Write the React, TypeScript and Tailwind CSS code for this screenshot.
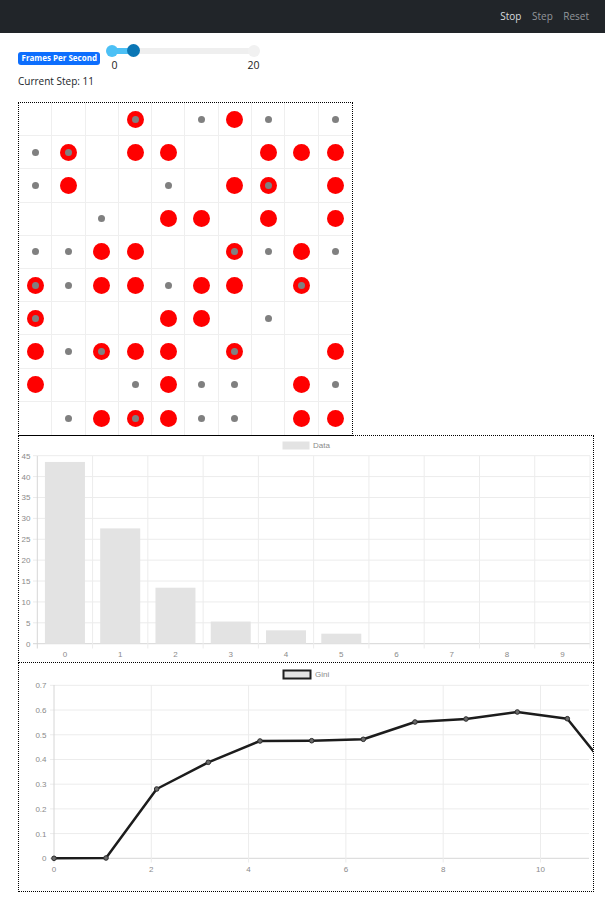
import React from 'react';

// --- Agent grid data (R = rich agent, G = broke agent, B = both in cell) ---
const GRID_ROWS = [
  '. . . B . G R G . G',
  'G B . R R . . R R R',
  'G R . . G . R B . R',
  '. . G . R R . R . R',
  'G G R R . . B G R G',
  'B G R R G R R . B .',
  'B . . . R R . G . .',
  'R G B R R . B . . R',
  'R . . G R G G . R G',
  '. G R B R G G . R R',
].map((r) => r.split(' '));

const WEALTH_BINS = [43.5, 27.6, 13.4, 5.3, 3.2, 2.4, 0, 0, 0, 0];

const GINI_POINTS: [number, number][] = [
  [54, 858.3],
  [106, 858],
  [156.7, 789],
  [208.3, 762.3],
  [260, 741],
  [311.7, 740.7],
  [363.3, 739.3],
  [415, 722],
  [466, 719],
  [517.3, 712],
  [567.3, 718.7],
  [619, 783],
];

const chartFont = { fontFamily: '"Liberation Sans", Arial, sans-serif' };

function Cell({ kind, col, row }: { kind: string; col: number; row: number }) {
  const lines = `${col < 9 ? 'border-r' : ''} ${row < 9 ? 'border-b' : ''}`;
  return (
    <div className={`flex items-center justify-center border-[#efefef] ${lines}`}>
      {kind === 'R' && <div className="w-[17px] h-[17px] rounded-full bg-[#ff0000]" />}
      {kind === 'G' && <div className="w-[7px] h-[7px] rounded-full bg-[#808080]" />}
      {kind === 'B' && (
        <div className="w-[17px] h-[17px] rounded-full bg-[#ff0000] flex items-center justify-center">
          <div className="w-[7px] h-[7px] rounded-full bg-[#808080]" />
        </div>
      )}
    </div>
  );
}

function AgentGrid() {
  return (
    <div className="w-[335px] h-[334px] border border-dotted border-black">
      <div className="grid grid-cols-10 grid-rows-10 w-full h-full">
        {GRID_ROWS.map((row, r) =>
          row.map((kind, c) => <Cell key={`${r}-${c}`} kind={kind} col={c} row={r} />)
        )}
      </div>
    </div>
  );
}

function BarChart() {
  const x0 = 37.3;
  const cat = 55.27;
  const yZero = 642.7;
  const perUnit = 4.178;
  const ticks = [0, 5, 10, 15, 20, 25, 30, 35, 40, 45];
  return (
    <div className="w-[576px] h-[228px] border border-dotted border-black -mt-px">
      <svg width="574" height="226" viewBox="19 435 574 226" style={chartFont}>
        {/* legend */}
        <rect x="282.5" y="440.5" width="27" height="8" fill="#e3e3e3" />
        <text x="313" y="447.3" fontSize="8" fill="#8a8a8a">Data</text>
        {/* horizontal grid */}
        {ticks.map((t) => {
          const y = yZero - t * perUnit;
          return (
            <g key={t}>
              <line x1="33" x2="590" y1={y} y2={y} stroke={t === 0 ? '#d6d6d6' : '#ececec'} strokeWidth="1" />
              <text x="30.5" y={y + 3} fontSize="8" fill="#8a8a8a" textAnchor="end">{t}</text>
            </g>
          );
        })}
        {/* vertical grid */}
        {Array.from({ length: 11 }).map((_, i) => {
          const x = x0 + i * cat;
          return <line key={i} x1={x} x2={x} y1="455" y2="647.5" stroke={i === 0 ? '#d6d6d6' : '#ececec'} strokeWidth="1" />;
        })}
        {/* bars */}
        {WEALTH_BINS.map((v, i) => {
          const cx = x0 + (i + 0.5) * cat;
          const h = v * perUnit;
          return (
            <g key={i}>
              {v > 0 && <rect x={cx - 20} y={yZero - h} width="40" height={h} fill="#e3e3e3" />}
              <text x={cx} y="656" fontSize="8" fill="#8a8a8a" textAnchor="middle">{i}</text>
            </g>
          );
        })}
      </svg>
    </div>
  );
}

function LineChart() {
  const yZero = 858.3;
  const step = 24.71;
  const xStep = 48.65;
  const ticks = [0, 1, 2, 3, 4, 5, 6, 7];
  const xTicks = [0, 2, 4, 6, 8, 10];
  const path = GINI_POINTS.map(([x, y], i) => `${i === 0 ? 'M' : 'L'}${x} ${y}`).join(' ');
  return (
    <div className="w-[576px] h-[230px] border border-dotted border-black -mt-px">
      <svg width="574" height="228" viewBox="19 663 574 228" style={chartFont}>
        {/* legend */}
        <rect x="283.5" y="670.5" width="27" height="8" fill="#e3e3e3" stroke="#1f1f1f" strokeWidth="2" />
        <text x="315" y="677.3" fontSize="8" fill="#8a8a8a">Gini</text>
        {ticks.map((t) => {
          const y = yZero - t * step;
          return (
            <g key={t}>
              <line x1="50" x2="589" y1={y} y2={y} stroke={t === 0 ? '#d6d6d6' : '#ececec'} strokeWidth="1" />
              <text x="46.5" y={y + 3} fontSize="8" fill="#8a8a8a" textAnchor="end">{t === 0 ? '0' : `0.${t}`}</text>
            </g>
          );
        })}
        {xTicks.map((t) => {
          const x = 54 + t * xStep;
          return (
            <g key={t}>
              <line x1={x} x2={x} y1="685" y2="862.5" stroke={t === 0 ? '#d6d6d6' : '#ececec'} strokeWidth="1" />
              <text x={x} y="871.5" fontSize="8" fill="#8a8a8a" textAnchor="middle">{t}</text>
            </g>
          );
        })}
        <path d={path} fill="none" stroke="#1c1c1c" strokeWidth="2.5" strokeLinejoin="round" />
        {GINI_POINTS.map(([x, y], i) => (
          <circle key={i} cx={x} cy={y} r="2.3" fill="#6b6b6b" stroke="#2a2a2a" strokeWidth="1" />
        ))}
      </svg>
    </div>
  );
}

function FpsSlider() {
  return (
    <div className="flex flex-col w-[154px]">
      <div className="relative h-[13px]">
        <div className="absolute left-[6px] right-[6px] top-[3.5px] h-[6px] rounded-full bg-[#efefef]" />
        <div className="absolute left-[6px] w-[22px] top-[3.5px] h-[6px] bg-[#4cc0f5]" />
        <div className="absolute left-0 top-[0.5px] w-[12px] h-[12px] rounded-full bg-[#4cc0f5]" />
        <div className="absolute right-0 top-[0.5px] w-[12px] h-[12px] rounded-full bg-[#f1f1f1]" />
        <div className="absolute left-[21px] top-0 w-[13px] h-[13px] rounded-full bg-[#0a76b5]" />
      </div>
      <div className="flex justify-between text-[10.5px] leading-[12px] text-[#222] pl-[5px] pr-[1px] mt-[2px]">
        <span>0</span>
        <span>20</span>
      </div>
    </div>
  );
}

export default function App() {
  return (
    <div className="min-h-screen bg-white" style={{ fontFamily: '"Open Sans", "Noto Sans", sans-serif' }}>
      <nav className="h-[33px] bg-[#212529] flex items-center justify-end pr-[16px] gap-[10.5px] text-[10px]">
        <span className="text-[#d8dbde]">Stop</span>
        <span className="text-[#93979b]">Step</span>
        <span className="text-[#93979b]">Reset</span>
      </nav>
      <main className="pl-[18px] pt-[11px]">
        <div className="flex items-start gap-[6px]">
          <span className="mt-[8px] bg-[#0d6efd] text-white font-bold text-[8px] leading-[12.5px] px-[3.5px] rounded-[3px]">
            Frames Per Second
          </span>
          <FpsSlider />
        </div>
        <div className="mt-[2px] text-[10px] leading-[16px] text-[#212529]">Current Step: 11</div>
        <div className="mt-[13px]">
          <AgentGrid />
          <BarChart />
          <LineChart />
        </div>
      </main>
    </div>
  );
}
